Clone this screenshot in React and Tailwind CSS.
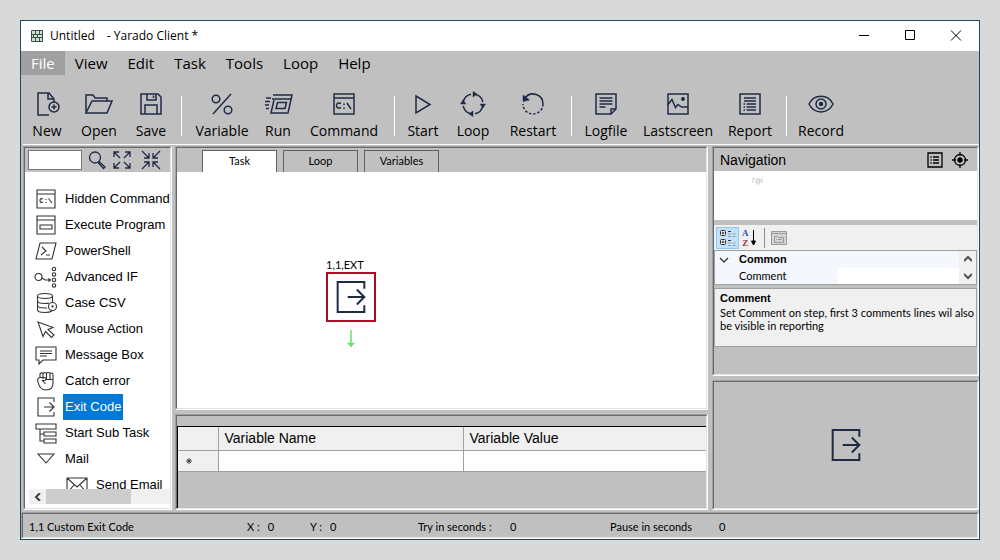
import React, { useState } from 'react';

const ui = "font-['Open_Sans',sans-serif]";
const small = 'font-[Lato,sans-serif] text-[11px]';
const sunken = 'border border-t-[#a0a0a0] border-l-[#a0a0a0] border-b-white border-r-white';
const sunkenInner = 'border border-t-[#696969] border-l-[#696969] border-b-[#e3e3e3] border-r-[#e3e3e3]';

function Svg({ size = 'w-8 h-8', box = '0 0 32 32', width = 1.5, children }) {
  return (
    <svg className={`${size} shrink-0`} viewBox={box} fill="none" stroke="currentColor" strokeWidth={width} aria-hidden="true">
      {children}
    </svg>
  );
}

// Toolbar drawings, all on a 32px grid
const icons = {
  new: (
    <>
      <path d="M18 27H7V5h11l5 6v4M17 5v6h6" />
      <circle cx="23" cy="19" r="5" />
      <path d="M23 16.5v5M20.5 19h5" />
    </>
  ),
  open: (
    <>
      <path d="M3 25V7h7l2 3h12v4" />
      <path d="M3 25l6-12h20l-5 12z" />
    </>
  ),
  save: (
    <>
      <path d="M6 6h17l3 3v17H6z" />
      <path d="M12 6v6h9V6M10 26V17h12v9M18.5 7.5v2.5" />
    </>
  ),
  variable: (
    <>
      <circle cx="10" cy="11" r="3.8" />
      <circle cx="22" cy="22" r="3.8" />
      <path d="M25 6L7 26" />
    </>
  ),
  run: (
    <>
      <path d="M11 7h19l-4 18H9l3-13" />
      <path d="M10 11h19" />
      <path d="M15.5 14.5h9l-1.5 6h-9zM4 10h5M3 13.5h5M3 17h4M4 20.5h3" />
    </>
  ),
  command: (
    <>
      <path d="M6 6h20v20H6zM6 10h20" />
      <path d="M13 15.5c-3-1.500-4.500 0-4.500 2s1.500 3.500 4.500 2M16 15.5v1.500M16 19.5v1.500M19 15l4 6" />
    </>
  ),
  start: <path d="M9 8l14 8.500L9 25z" />,
  loop: (
    <>
      <circle cx="16" cy="16" r="10" strokeDasharray="11.5 4.200" strokeDashoffset="-2" />
      <path d="M16 3.500l4 2.500-4 3zM28.500 16l-2.500 4-3-4zM16 28.500l-4-2.500 4-3zM3.500 16L6 12l3 4z" fill="currentColor" strokeWidth="0.5" />
    </>
  ),
  restart: (
    <>
      <path d="M8 10A10 10 0 0 1 26 16" />
      <path d="M26 16A10 10 0 0 1 6 16" strokeDasharray="2.5 1.8" />
      <path d="M6 7v6.500l6.500-1.500z" fill="currentColor" strokeWidth="0.5" />
    </>
  ),
  logfile: (
    <>
      <path d="M21 26H6V6h20v15zM21 26v-5h5" />
      <path d="M9.500 10h13M9.500 13h13M9.500 16h13M9.500 19h6" />
    </>
  ),
  lastscreen: (
    <>
      <path d="M6 6h20v20H6z" />
      <path d="M6 16.500l4-5 3.500 8 2.500-3 3.500 2.500H26" />
      <circle cx="21" cy="11" r="1.2" fill="currentColor" />
    </>
  ),
  report: (
    <>
      <path d="M6 6h20v20H6z" />
      <path d="M10 10h12M10 13h12M12.500 16h9.500M12.500 19h9.500M12.500 22h9.500M9.500 16h1.500M9.500 19h1.500M9.500 22h1.500" />
    </>
  ),
  record: (
    <>
      <path d="M4 16C9 5.500 23 5.500 28 16 23 26.500 9 26.500 4 16z" />
      <circle cx="16" cy="16" r="5" />
      <circle cx="16" cy="16" r="1.5" fill="currentColor" />
    </>
  ),
};

// Step drawings for the tree, 24px grid
const stepIcons = {
  hidden: (
    <>
      <path d="M3 3h18v18H3zM3 7h18" />
      <path d="M9 12c-2-1-3 0-3 1.500S7 16 9 15M12 12v1M12 15v1M14.500 11.500l3.500 4.500" />
    </>
  ),
  execute: <path d="M3 3h18v18H3zM3 7h18M6 12h12v4H6z" />,
  powershell: <path d="M6 4h16l-4 16H2zM8 8l4 4-5 4M12 16h4" />,
  advanced: (
    <>
      <circle cx="4.5" cy="12" r="3.5" />
      <path d="M8 13l3 2h5M14.500 13.500l2 1.500-2 1.500" />
      <circle cx="20" cy="4" r="1.7" />
      <circle cx="20" cy="9.5" r="1.7" />
      <circle cx="20" cy="15" r="1.7" />
      <circle cx="20" cy="20.5" r="1.7" />
    </>
  ),
  database: (
    <>
      <ellipse cx="11" cy="5" rx="7.5" ry="2.5" />
      <path d="M3.500 5v14c0 1.500 3 2.500 7.500 2.500 3 0 5.500-.5 7-1.500M18.500 5v6M3.500 10c0 1.500 3 2.500 7.500 2.500 1.500 0 3 0 4-.5M3.500 14.500c0 1.500 3 2.500 7.500 2.500h2" />
      <circle cx="18.5" cy="15.5" r="4" />
      <circle cx="18.5" cy="15.5" r="0.6" />
    </>
  ),
  mouse: <path d="M4 5l15 5.500-5 2 6 5.500-2.500 2.500-6-6-2.500 5z" />,
  message: <path d="M2 4h20v13H9l-4 4v-4H2zM6 8h12M6 10.500h12M6 13h7" />,
  fist: (
    <path d="M4 13c-1-3 0-4.500 2-4.500V5c0-1.500 3-1.500 3 0 0-2 3.500-2 3.500 0 0-2 3.500-2 3.500 0 0-1.500 3-1.500 3 .5V14c0 5-2 7-7 7-4 0-7-3-8-8zM9 5v5M12.500 5v5M16 5v5M6 8.500h4.500c2 0 2 3 0 3H8.500l3 3.500M19 10.500h-7" />
  ),
  exit: <path d="M20 7V3H4v18h16v-4M10 12h10M15.500 7.500L20 12l-4.500 4.500" />,
  sub: <path d="M2 3h20v5H2zM6 8v12h4M6 13h4M10 11h12v4H10zM10 18h12v4H10z" />,
  mail: <path d="M4 7h16l-8 9z" />,
  envelope: <path d="M2 5h20v15H2zM2 5l10 9L22 5M2 20l7-8M22 20l-7-8" />,
};

const menus = ['File', 'View', 'Edit', 'Task', 'Tools', 'Loop', 'Help'];

const toolGroups = [
  { className: 'pr-1', tools: [['New', 'new', 'w-13'], ['Open', 'open', 'w-13'], ['Save', 'save', 'w-13']] },
  { className: 'px-1.5', tools: [['Variable', 'variable', 'w-17'], ['Run', 'run', 'w-11'], ['Command', 'command', 'w-22']] },
  { className: 'pr-2 pl-2', tools: [['Start', 'start', 'w-10'], ['Loop', 'loop', 'w-15'], ['Restart', 'restart', 'w-15']] },
  { className: 'pr-2 pl-1.5', tools: [['Logfile', 'logfile', 'w-14'], ['Lastscreen', 'lastscreen', 'w-22'], ['Report', 'report', 'w-14']] },
  { className: 'px-1.5', tools: [['Record', 'record', 'w-14']] },
];

const steps = [
  ['Hidden Command', 'hidden'],
  ['Execute Program', 'execute'],
  ['PowerShell', 'powershell'],
  ['Advanced IF', 'advanced'],
  ['Case CSV', 'database'],
  ['Mouse Action', 'mouse'],
  ['Message Box', 'message'],
  ['Catch error', 'fist'],
  ['Exit Code', 'exit'],
  ['Start Sub Task', 'sub'],
  ['Mail', 'mail'],
];

function Panel({ className = '', children }) {
  return (
    <section className={`${sunken} ${className} flex min-h-0 min-w-0`}>
      <div className={`${sunkenInner} flex min-h-0 min-w-0 flex-1 flex-col overflow-hidden`}>{children}</div>
    </section>
  );
}

function TitleBar() {
  return (
    <header className={`${ui} flex h-[30px] shrink-0 items-center bg-white pl-2.5 text-xs`}>
      <svg className="mr-[7px] h-3 w-3" viewBox="0 0 12 12" fill="#cfe6cf" stroke="#3d4a4a" aria-hidden="true">
        <path d="M.5 .5h11v11H.5zM.5 4.500h11M.5 7.500h11M4.500 .5v4M8.500 .5v4M2.500 4.500v3M6.500 4.500v3M4.500 7.500v4M8.500 7.500v4" />
      </svg>
      <h1 className="flex flex-1 gap-3">
        <span>Untitled</span>
        <span>- Yarado Client *</span>
      </h1>
      <button aria-label="Minimize" className="flex w-[46px] justify-center">
        <Svg size="w-3 h-3" box="0 0 12 12" width={1}><path d="M1 5.500h10" /></Svg>
      </button>
      <button aria-label="Maximize" className="flex w-[46px] justify-center">
        <Svg size="w-3 h-3" box="0 0 12 12" width={1}><path d="M1.500 .5h9v9h-9z" /></Svg>
      </button>
      <button aria-label="Close" className="flex w-[46px] justify-center">
        <Svg size="w-3 h-3" box="0 0 12 12" width={1}><path d="M1 .5l10 10M11 .5l-10 10" /></Svg>
      </button>
    </header>
  );
}

function Toolbar() {
  return (
    <div className={`${ui} flex h-[69px] shrink-0 text-sm`}>
      {toolGroups.map((group, i) => (
        <React.Fragment key={i}>
          {i > 0 && <div className="mt-[21px] h-10 w-px bg-white" />}
          <div className={`flex pt-[13px] ${group.className}`}>
            {group.tools.map(([label, icon, width]) => (
              <button key={label} className={`${width} flex flex-col items-center`}>
                <span className="text-[#1f2a44]"><Svg>{icons[icon]}</Svg></span>
                <span className="leading-[22px]">{label}</span>
              </button>
            ))}
          </div>
        </React.Fragment>
      ))}
    </div>
  );
}

function StepTree() {
  const [selected, setSelected] = useState('Exit Code');
  return (
    <Panel className="w-[149px] shrink-0">
      <div className="flex h-6 shrink-0 items-center gap-[5px] bg-[#c0c0c0] pl-[3px] text-[#1f2a44]">
        <input aria-label="Search steps" className="h-5 w-[54px] border border-[#7a7a7a] bg-white px-1 text-xs outline-none" />
        <button aria-label="Search">
          <Svg size="w-5 h-5" box="0 0 20 20" width={1.3}>
            <circle cx="8" cy="7.5" r="5.5" />
            <path d="M12 11.500l6 5.500-1.500 1.500-5.500-6" />
          </Svg>
        </button>
        <button aria-label="Expand all">
          <Svg size="w-5 h-5" box="0 0 20 20" width={1.3}>
            <path d="M2 7V2h5M13 2h5v5M18 13v5h-5M7 18H2v-5M2 2l6 6M18 2l-6 6M18 18l-6-6M2 18l6-6" />
          </Svg>
        </button>
        <button aria-label="Collapse all" className="ml-1">
          <Svg size="w-5 h-5" box="0 0 20 20" width={1.3}>
            <path d="M3 8h5V3M12 3v5h5M17 12h-5v5M8 17v-5H3M1 1l7 7M19 1l-7 7M19 19l-7-7M1 19l7-7" />
          </Svg>
        </button>
      </div>
      <div className="flex min-h-0 flex-1 flex-col bg-white pb-1 pl-1">
        <ul className="min-h-0 flex-1 overflow-hidden pt-3.5 text-[13px]">
          {steps.map(([label, icon]) => (
            <li key={label}>
              <button onClick={() => setSelected(label)} className="flex h-[26px] items-center gap-[5px] pl-[5px] whitespace-nowrap">
                <span className="text-[#333]"><Svg size="w-6 h-6" box="0 0 24 24" width={1.1}>{stepIcons[icon]}</Svg></span>
                <span className={`px-0.5 leading-[26px] ${selected === label ? 'bg-[#0078d7] text-white' : ''}`}>{label}</span>
              </button>
            </li>
          ))}
          <li>
            <button className="flex h-[26px] items-center gap-[5px] pl-9 whitespace-nowrap">
              <span className="text-[#333]"><Svg size="w-6 h-6" box="0 0 24 24" width={1.1}>{stepIcons.envelope}</Svg></span>
              <span className="px-0.5">Send Email</span>
            </button>
          </li>
        </ul>
        <div className="flex h-[15px] shrink-0 bg-[#f0f0f0]">
          <button aria-label="Scroll left" className="flex w-[17px] items-center justify-center text-[#404040]">
            <Svg size="w-2 h-2" box="0 0 8 8" width={2}><path d="M6 0L2 4l4 4" /></Svg>
          </button>
          <div className="w-[85px] bg-[#cdcdcd]" />
        </div>
      </div>
    </Panel>
  );
}

function TaskCanvas() {
  const [tab, setTab] = useState('Task');
  return (
    <Panel className="h-[264px] shrink-0">
      <div role="tablist" className={`${small} flex h-6 shrink-0 items-end gap-1.5 bg-[#c0c0c0] pl-[25px]`}>
        {['Task', 'Loop', 'Variables'].map((name) => (
          <button
            key={name}
            role="tab"
            aria-selected={tab === name}
            onClick={() => setTab(name)}
            className={`h-[22px] w-[75px] border border-b-0 border-[#606060] ${tab === name ? 'bg-white' : ''}`}
          >
            {name}
          </button>
        ))}
      </div>
      <div className="relative flex-1 bg-white">
        <div className="absolute top-[85px] left-[149px]">
          <p className={`${small} leading-[15px]`}>1,1,EXT</p>
          <div className="flex h-[50px] w-[50px] items-center justify-center border-2 border-[#ad0c26] text-[#1f2a44]">
            <Svg size="w-10 h-10" box="0 0 24 24" width={1.2}>{stepIcons.exit}</Svg>
          </div>
          <svg className="mx-auto mt-2 h-[18px] w-2.5" viewBox="0 0 10 18" fill="#6edc6e" stroke="#6edc6e" aria-hidden="true">
            <path d="M5 0v14" strokeWidth="1.5" />
            <path d="M1.500 13h7L5 17z" strokeWidth="0.5" />
          </svg>
        </div>
      </div>
    </Panel>
  );
}

function VariableTable() {
  return (
    <Panel className="flex-1">
      <div className="mt-2.5 flex-1 border-t border-l border-black">
        <table className="w-full table-fixed border-collapse text-sm">
          <thead>
            <tr className="h-[23px] bg-[#f0f0f0] text-left">
              <th aria-label="Row" className="w-10 border-r border-b border-[#a0a0a0]" />
              <th className="w-[245px] border-r border-b border-[#a0a0a0] p-0 pl-1.5 leading-5 font-normal">Variable Name</th>
              <th className="border-b border-[#a0a0a0] p-0 pl-1.5 leading-5 font-normal">Variable Value</th>
            </tr>
          </thead>
          <tbody>
            <tr className="h-[21px] bg-white">
              <td className="border-r border-b border-[#a0a0a0] bg-[#f0f0f0] p-0 pl-2">
                <svg className="h-1.5 w-1.5" viewBox="0 0 6 6" stroke="#444" aria-hidden="true">
                  <path d="M3 0v6M0 3h6M1 1l4 4M5 1L1 5" />
                </svg>
              </td>
              <td className="border-r border-b border-[#a0a0a0]" />
              <td className="border-b border-[#a0a0a0]" />
            </tr>
          </tbody>
        </table>
      </div>
    </Panel>
  );
}

function PropertyToolbar() {
  return (
    <div className="mt-[5px] flex h-[25px] shrink-0 items-center bg-[#f0f0f0] pl-0.5">
      <button aria-label="Categorized" className="flex h-[22px] w-[23px] items-center justify-center border border-[#90c8f6] bg-[#c4e1f7]">
        <svg className="h-[18px] w-[18px]" viewBox="0 0 18 18" fill="white" stroke="#333" aria-hidden="true">
          <rect x="1.5" y="1.5" width="5" height="5" rx="1" />
          <rect x="1.5" y="10.5" width="5" height="5" rx="1" />
          <path d="M2.500 4h3M4 2.500v3M2.500 13h3M4 11.500v3" />
          <path d="M9 2.500h3M9 11.500h3" />
          <path d="M9 5h3M13.500 5h3M9 7.500h3M13.500 7.500h3M9 14h3M13.500 14h3M9 16.500h3M13.500 16.500h3" stroke="#8a9bb5" />
        </svg>
      </button>
      <button aria-label="Alphabetical" className="ml-[3px] flex items-center">
        <span className="flex flex-col font-['Liberation_Serif',serif] text-[9px] leading-[10px] font-bold">
          <span className="text-[#2b4fa8]">A</span>
          <span className="text-[#943030]">Z</span>
        </span>
        <svg className="h-4 w-2" viewBox="0 0 8 16" stroke="black" aria-hidden="true">
          <path d="M4.500 0v14M2.500 11h4L4.500 15z" />
        </svg>
      </button>
      <div className="mr-1.5 ml-[7px] h-5 w-px bg-[#8c8c8c]" />
      <button aria-label="Property pages" disabled>
        <svg className="h-4 w-4" viewBox="0 0 16 16" fill="none" stroke="#9c9c9c" aria-hidden="true">
          <path d="M.5 1.500h15v13H.5z" fill="#d4d4d4" />
          <path d="M.5 3.500h15M3.500 12.500V6.500h3l1 1h5v5zM5 9.500h1M7 9.500h4" />
        </svg>
      </button>
    </div>
  );
}

function NavigationPanel() {
  return (
    <Panel className="h-[230px] shrink-0">
      <div className="flex h-[23px] shrink-0 items-center gap-[9px] pr-[9px] pl-1.5">
        <h2 className="flex-1 text-sm">Navigation</h2>
        <button aria-label="List">
          <Svg size="w-4 h-4" box="0 0 16 16" width={1.3}>
            <path d="M1 1h14v14H1z" />
            <path d="M6 5h6M6 8h6M6 11h6M3.500 5h1.200M3.500 8h1.200M3.500 11h1.200" />
          </Svg>
        </button>
        <button aria-label="Center view">
          <Svg size="w-4 h-4" box="0 0 16 16" width={1.3}>
            <circle cx="8" cy="8" r="5.5" />
            <circle cx="8" cy="8" r="2" fill="currentColor" />
            <path d="M8 0v4M8 12v4M0 8h4M12 8h4" />
          </Svg>
        </button>
      </div>
      <div className="h-[49px] shrink-0 bg-white pt-1.5 pl-[38px]">
        <svg className="h-2 w-3" viewBox="0 0 12 8" fill="none" stroke="#b5b5b5" strokeWidth="0.7" aria-hidden="true">
          <path d="M1 6V1.500h2M4 2h4v4H4zM5 4h3M10 1v5" />
          <path d="M6 7v1" stroke="#8fdc8f" />
        </svg>
      </div>
      <PropertyToolbar />
      <div className={`${small} flex h-[35px] shrink-0 border border-[#a0a0a0] bg-[#f4f7fc]`}>
        <div className="min-w-0 flex-1">
          <div className="flex h-[17px] items-center font-['Liberation_Sans',sans-serif] font-bold">
            <span className="flex w-6 pl-1 text-[#404040]">
              <Svg size="w-2.5 h-2.5" box="0 0 10 10"><path d="M1 3l4 4 4-4" /></Svg>
            </span>
            Common
          </div>
          <div className="flex h-4 items-center pl-6">
            <label htmlFor="comment" className="w-[99px]">Comment</label>
            <input id="comment" className="h-4 min-w-0 flex-1 bg-white px-1 outline-none" />
          </div>
        </div>
        <div className="flex w-[17px] flex-col items-center justify-around bg-[#f0f0f0] text-[#505050]">
          <button aria-label="Scroll up"><Svg size="w-2 h-2" box="0 0 8 8" width={2}><path d="M0 6l4-4 4 4" /></Svg></button>
          <button aria-label="Scroll down"><Svg size="w-2 h-2" box="0 0 8 8" width={2}><path d="M0 2l4 4 4-4" /></Svg></button>
        </div>
      </div>
      <div className="mt-[3px] h-[59px] shrink-0 border border-[#a0a0a0] bg-[#f0f0f0] pt-[3px] pl-[5px]">
        <h3 className="mb-px text-[11px] leading-[13px] font-bold">Comment</h3>
        <p className={`${small} leading-[13px]`}>Set Comment on step, first 3 comments lines wil also be visible in reporting</p>
      </div>
    </Panel>
  );
}

function StatusBar() {
  return (
    <footer className={`${sunken} mt-0.5 flex h-[27px] shrink-0`}>
      <div className={`${sunkenInner} ${small} flex flex-1 items-center pt-1 pl-1.5`}>
        <span className="w-[218px]">1,1 Custom Exit Code</span>
        <span className="flex w-[63px] gap-2"><span>X :</span><span>0</span></span>
        <span className="flex w-[108px] gap-2"><span>Y :</span><span>0</span></span>
        <span className="w-[92px]">Try in seconds :</span>
        <span className="w-[100px]">0</span>
        <span className="w-[109px]">Pause in seconds</span>
        <span>0</span>
      </div>
    </footer>
  );
}

export default function App() {
  const [menu, setMenu] = useState('File');
  return (
    <div className="flex h-screen bg-[#d9d9d9] p-5 font-['Liberation_Sans',Arial,sans-serif] text-black">
      <div className="flex min-w-0 flex-1 flex-col border border-[#1a4a63] bg-[#c0c0c0]">
        <TitleBar />
        <nav className={`${ui} flex h-6 shrink-0 text-[15px]`}>
          {menus.map((name) => (
            <button
              key={name}
              onClick={() => setMenu(name)}
              className={`px-2.5 ${menu === name ? 'bg-[#a0a0a0] text-white' : ''}`}
            >
              {name}
            </button>
          ))}
        </nav>
        <Toolbar />
        <main className="ml-0.5 flex min-h-0 flex-1 border-t border-white pt-px">
          <StepTree />
          <div className="mr-1 ml-[3px] flex min-w-0 flex-1 flex-col gap-1">
            <TaskCanvas />
            <VariableTable />
          </div>
          <div className="flex w-[267px] shrink-0 flex-col gap-1">
            <NavigationPanel />
            <Panel className="flex-1">
              <div className="flex flex-1 items-center justify-center text-[#1f2a44]">
                <Svg size="w-10 h-10" box="0 0 24 24" width={1.2}>{stepIcons.exit}</Svg>
              </div>
            </Panel>
          </div>
        </main>
        <StatusBar />
      </div>
    </div>
  );
}
